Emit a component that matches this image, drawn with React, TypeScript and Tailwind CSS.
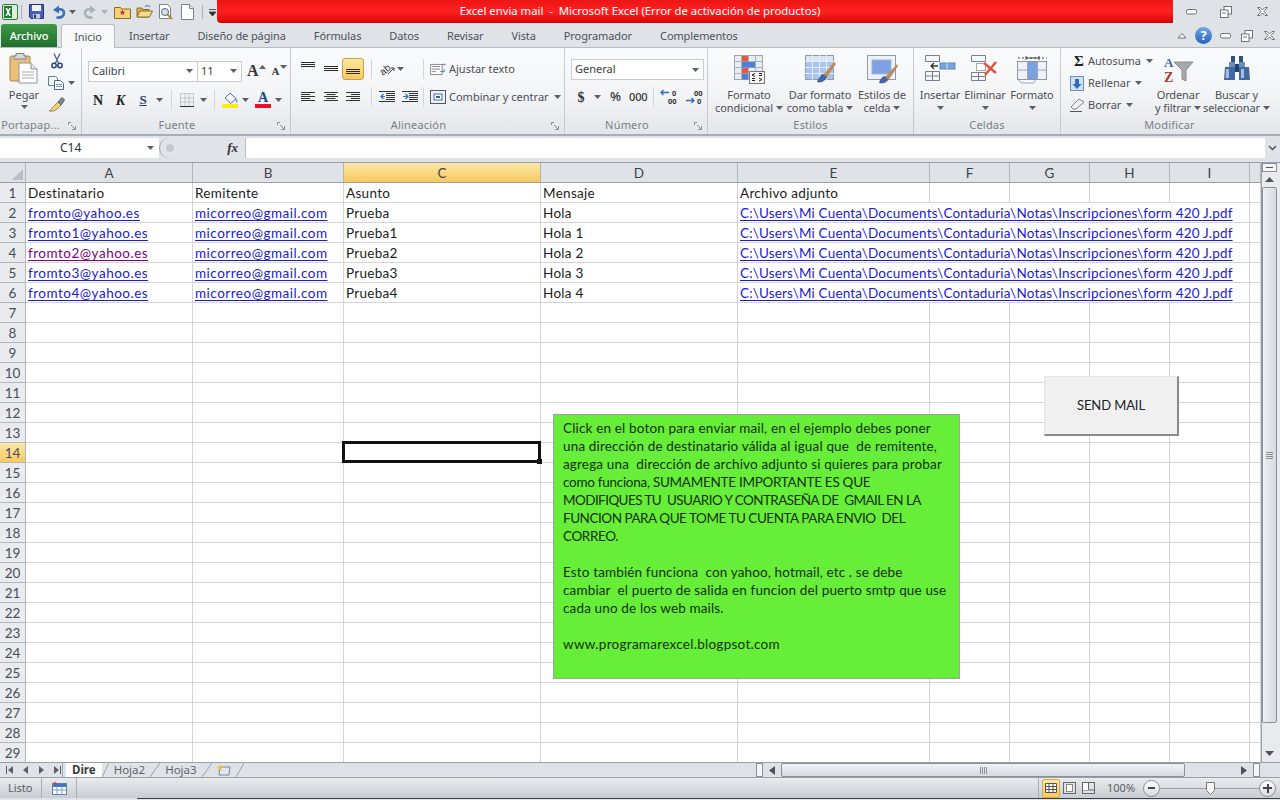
import type { ReactNode } from "react";

const ui = "font-['Noto_Sans','Open_Sans',sans-serif]";

function Caret({ className = "" }: { className?: string }) {
  return (
    <svg width="7" height="4" viewBox="0 0 7 4" className={`shrink-0 ${className}`}>
      <path d="M0 0h7L3.5 4z" fill="#5b5f66" />
    </svg>
  );
}

function ExcelLogo() {
  return (
    <svg width="16" height="16" viewBox="0 0 16 16" className="shrink-0">
      <rect x=".5" y=".5" width="15" height="15" rx="1.5" fill="#dcefd8" stroke="#2f7d3a" />
      <rect x="2" y="2" width="8" height="12" fill="#1e7a34" />
      <path d="M3.4 4h1.8l1 2.2L7.3 4h1.5L7 8l1.9 4H7.1L6 9.7 5 12H3.4l1.9-4z" fill="#fff" />
    </svg>
  );
}

function SaveIcon() {
  return (
    <svg width="15" height="15" viewBox="0 0 15 15" className="shrink-0 ml-[7px]">
      <path d="M.5.5h14v14H2L.5 13z" fill="#4a5fb5" stroke="#27347c" />
      <rect x="3" y="1" width="9" height="6" fill="#eef2fb" />
      <rect x="4" y="10" width="7" height="4.5" fill="#c7d0e8" />
      <rect x="5" y="10.6" width="2" height="3.4" fill="#27347c" />
    </svg>
  );
}

function UndoIcon({ gray = false, className = "" }: { gray?: boolean; className?: string }) {
  const c = gray ? "#a9b2ba" : "#3c6fb5";
  return (
    <svg width="14" height="14" viewBox="0 0 14 14" className={`shrink-0 ${gray ? "-scale-x-100" : ""} ${className}`}>
      <path d="M4.5 12.5c5 .6 7.5-1.600 7.500-4.500S9.500 3.500 6 4.500" fill="none" stroke={c} strokeWidth="2.600" />
      <path d="M7 .5 1 5l6 3.500z" fill={c} />
    </svg>
  );
}

function FolderStar() {
  return (
    <svg width="17" height="14" viewBox="0 0 17 14" className="shrink-0 ml-[6px]">
      <path d="M.5 2.500h6l1 1.500h9v9.500H.5z" fill="#f3d27a" stroke="#8e6d22" />
      <path d="M8.500 4.500l.8 2 2.100.2-1.600 1.400.5 2-1.800-1.100-1.800 1.100.5-2L5.600 6.700l2.100-.2z" fill="#c2332a" />
    </svg>
  );
}

function FolderOpen() {
  return (
    <svg width="17" height="15" viewBox="0 0 17 15" className="shrink-0 ml-[5px]">
      <path d="M1 4h5l1 1.500h6V13H1z" fill="#d9ab4c" stroke="#8e6d22" />
      <path d="M1 13l3-6h12.500l-3 6z" fill="#f6dc91" stroke="#8e6d22" />
      <path d="M9 3c1.500-2 3.500-2 5 0" fill="none" stroke="#3a7fc1" strokeWidth="1.200" />
    </svg>
  );
}

function PreviewIcon() {
  return (
    <svg width="16" height="16" viewBox="0 0 16 16" className="shrink-0 ml-[5px]">
      <path d="M1.500.5h8l3 3v11h-11z" fill="#fff" stroke="#7c828a" />
      <circle cx="7" cy="8" r="3.500" fill="#cfe3f5" stroke="#5a6470" />
      <path d="M9.500 10.500 14 15" stroke="#b08a35" strokeWidth="2" />
    </svg>
  );
}

function PageIcon() {
  return (
    <svg width="13" height="16" viewBox="0 0 13 16" className="shrink-0 ml-[7px]">
      <path d="M.5.500h8l4 4v11H.5z" fill="#fff" stroke="#7c828a" />
      <path d="M8.500.500v4h4" fill="#e3e8ee" stroke="#7c828a" />
    </svg>
  );
}

function WinButtons({ small = false }: { small?: boolean }) {
  const s = "#6c7480";
  return (
    <>
      <svg width="11" height="6" viewBox="0 0 11 6" className="shrink-0">
        <rect x=".5" y=".5" width="10" height="4.500" rx="1.500" fill="#fff" stroke={s} />
      </svg>
      <svg width="12" height="12" viewBox="0 0 12 12" className={`shrink-0 ${small ? "ml-[10px]" : "ml-[23px]"}`}>
        <rect x="4" y=".5" width="7.500" height="7.500" fill="#fff" stroke={s} />
        <rect x=".5" y="4" width="7.500" height="7.500" fill="#fff" stroke={s} />
        <path d="M2 7h4" stroke={s} />
      </svg>
      <svg width="13" height="11" viewBox="0 0 13 11" className={`shrink-0 ${small ? "ml-[10px]" : "ml-[24px]"}`}>
        <path d="M1.500 1.500h2.500l2.500 2.500L9 1.500h2.500L8 5.500l3.500 4H9L6.500 7 4 9.500H1.500L5 5.500z" fill="#fff" stroke={s} />
      </svg>
    </>
  );
}

function Group({ w, label, launcher, children, last, labelPad = "" }: { w: number; label: string; launcher?: boolean; children: ReactNode; last?: boolean; labelPad?: string }) {
  return (
    <div style={{ width: w }} className={`shrink-0 flex flex-col ${last ? "" : "border-r border-[#c6cad0]"}`}>
      <div className="h-[69px] flex">{children}</div>
      <div className={`h-[17px] flex items-center justify-center relative text-[#7b8087] text-[11px] tracking-[0.2px] ${labelPad}`}>
        {label}
        {launcher && (
          <svg width="8" height="8" viewBox="0 0 8 8" className="absolute right-[5px] top-[5px]">
            <path d="M.5 3V.5H3M3 3l4 4M4 7.500h3.500V4" fill="none" stroke="#8b9098" />
          </svg>
        )}
      </div>
    </div>
  );
}

function BigBtn({ w, lines, caret, children }: { w: number; lines: string[]; caret?: boolean; children: ReactNode }) {
  return (
    <div style={{ width: w }} className="shrink-0 flex flex-col items-center text-[11px] leading-[13px] text-[#4c4f55] tracking-[-0.1px]">
      <div className="h-[37px] pt-[7px] flex items-start justify-center">{children}</div>
      <div className="mt-[3px] text-center whitespace-nowrap">{lines[0]}</div>
      <div className="flex items-center justify-center gap-[3px] whitespace-nowrap h-[13px]">
        {lines[1]}
        {caret && <Caret />}
      </div>
    </div>
  );
}

function HLines({ rows }: { rows: number[] }) {
  return (
    <svg width="14" height="12" viewBox="0 0 14 12">
      {rows.map((y, i) => (
        <path key={i} d={`M0 ${y + 0.5}h14`} stroke="#2a2a2a" />
      ))}
    </svg>
  );
}

function AlignIcon({ kind }: { kind: "l" | "c" | "r" }) {
  const ws = [14, 9, 14, 9, 14];
  return (
    <svg width="14" height="11" viewBox="0 0 14 11">
      {ws.map((w, i) => {
        const x = kind === "l" ? 0 : kind === "c" ? (14 - w) / 2 : 14 - w;
        return <path key={i} d={`M${x} ${i * 2 + 0.5}h${w}`} stroke="#333" />;
      })}
    </svg>
  );
}

function IndentIcon({ flip = false }: { flip?: boolean }) {
  return (
    <svg width="16" height="12" viewBox="0 0 16 12" className="shrink-0">
      {[0, 2, 4, 6, 8, 10].map((y) => (
        <path key={y} d={`M${y === 0 || y === 10 ? 0 : 7} ${y + 0.5}h${y === 0 || y === 10 ? 16 : 9}`} stroke="#333" />
      ))}
      <path d={flip ? "M1 5.500h4M3.500 3l2.500 2.500L3.500 8" : "M6 5.500H2M4.500 3 2 5.500 4.500 8"} fill="none" stroke="#2c6fc0" strokeWidth="1.200" />
    </svg>
  );
}

function DecimalIcon({ more = false }: { more?: boolean }) {
  return (
    <svg width="20" height="18" viewBox="0 0 20 18" className="shrink-0 overflow-visible">
      {more ? (
        <>
          <text x="9" y="8" fontSize="7.500" fontWeight="700" fontFamily="Noto Sans" fill="#333">00</text>
          <text x="12" y="16" fontSize="7.500" fontWeight="700" fontFamily="Noto Sans" fill="#333">0</text>
          <path d="M1 12.500h8M6.500 10 9 12.500 6.500 15" fill="none" stroke="#2c6fc0" strokeWidth="1.300" />
        </>
      ) : (
        <>
          <text x="12" y="8" fontSize="7.500" fontWeight="700" fontFamily="Noto Sans" fill="#333">0</text>
          <text x="8" y="16" fontSize="7.500" fontWeight="700" fontFamily="Noto Sans" fill="#333">00</text>
          <path d="M9 4.500H1M3.500 2 1 4.500 3.500 7" fill="none" stroke="#2c6fc0" strokeWidth="1.300" />
        </>
      )}
    </svg>
  );
}

function Clipboard() {
  return (
    <svg width="30" height="32" viewBox="0 0 30 32">
      <rect x="1" y="4" width="20" height="25" rx="1.500" fill="#e9bf7a" stroke="#a98546" />
      <path d="M7 4V1.500h8V4h2v3H5V4z" fill="#d7d9dc" stroke="#80848a" />
      <path d="M10 11h12l6 6v14H10z" fill="#fff" stroke="#8e9299" />
      <path d="M22 11v6h6" fill="#e6e8eb" stroke="#8e9299" />
      <path d="M13 20h12M13 23h12M13 26h12" stroke="#a4a8ae" />
    </svg>
  );
}

function Scissors() {
  return (
    <svg width="12" height="16" viewBox="0 0 12 16" className="ml-[3px]">
      <path d="M3 .500 7.500 10M9 .500 4.500 10" stroke="#5c6a7c" strokeWidth="1.400" />
      <circle cx="3" cy="12.500" r="2.200" fill="none" stroke="#28457f" strokeWidth="1.500" />
      <circle cx="9" cy="12.500" r="2.200" fill="none" stroke="#28457f" strokeWidth="1.500" />
    </svg>
  );
}

function CopyIcon() {
  return (
    <svg width="16" height="14" viewBox="0 0 16 14">
      <path d="M.5.500h7l2 2v7h-9z" fill="#f2f6fb" stroke="#5e7fa8" />
      <path d="M6.500 4.500h6l3 3v6h-9z" fill="#fff" stroke="#3f66a0" />
      <path d="M8 8.500h6M8 10.500h6" stroke="#7b9ac4" />
    </svg>
  );
}

function BrushIcon() {
  return (
    <svg width="17" height="15" viewBox="0 0 17 15">
      <path d="M10 5l3 3-4 4c-2 2-5 2.500-8 2 2.500-1 3-3 4.500-4.500z" fill="#ecd27f" stroke="#a08a3c" />
      <path d="M10 5l4-4.500 2.500 2.500-3.500 5z" fill="#7d8692" stroke="#525a64" />
    </svg>
  );
}

function FormatCond() {
  return (
    <svg width="31" height="29" viewBox="0 0 31 29">
      <rect x=".5" y=".5" width="28" height="24" fill="#e8edf4" stroke="#9aa4b2" />
      <path d="M7.500 0v25M14.500 0v25M21.500 0v25M0 6.500h29M0 12.500h29M0 18.500h29" stroke="#a9b2bf" />
      <rect x="8" y="1" width="6" height="5.500" fill="#e2574c" />
      <rect x="8" y="7" width="13" height="5.500" fill="#4f7fd6" />
      <rect x="8" y="13" width="6" height="5.500" fill="#e2574c" />
      <rect x="8" y="19" width="6" height="5.500" fill="#4f7fd6" />
      <rect x="15.500" y="16.500" width="15" height="12" fill="#f6f6f6" stroke="#777" />
      <path d="M21 18.500l-3 1.500 3 1.500M18 23.500h3M25 18.500h3M25 20.500h3M25 23l3 1.500-3 1.500M18 25.500h3" fill="none" stroke="#222" />
    </svg>
  );
}

function TableFormat() {
  return (
    <svg width="31" height="29" viewBox="0 0 31 29">
      <rect x=".5" y=".5" width="28" height="24" fill="#a9c4ee" stroke="#8d9bb0" />
      <rect x="1" y="1" width="27" height="6" fill="#dbe6f7" />
      <path d="M7.500 0v25M14.500 0v25M21.500 0v25M0 6.500h29M0 12.500h29M0 18.500h29" stroke="#e6edf8" />
      <path d="M29 7 20 18l-3 2-5 7c5 1 8-1 10-5l9-13z" fill="#b98c5b" />
      <path d="M12 27c1-4 4-7 6-8l4 3c-2 4-5 6-10 5z" fill="#3f66a8" />
    </svg>
  );
}

function CellStyles() {
  return (
    <svg width="31" height="29" viewBox="0 0 31 29">
      <rect x=".5" y=".5" width="28" height="24" fill="#eef2f7" stroke="#8d9bb0" />
      <rect x="5" y="5" width="19" height="14" fill="#7f9fe6" stroke="#a7b4c6" />
      <path d="M30 9l-10 11-3 2-4 6c5 1 8-1 10-5l8-12z" fill="#b98c5b" />
      <path d="M12 28c1-4 3-6 5-7l4 3c-2 3-4 5-9 4z" fill="#3f66a8" />
    </svg>
  );
}

function InsertCells() {
  return (
    <svg width="31" height="27" viewBox="0 0 31 27">
      <path d="M.5.500h14v6H.500zM.500 16.500h14v9H.500zM7.500 16.500v9M.500 21h14" fill="#f4f6f9" stroke="#76808c" />
      <rect x="15" y="8" width="15" height="6" fill="#78a6dc" stroke="#5a86bd" />
      <path d="M22 8v6" stroke="#cfe0f4" />
      <path d="M13 11H6M9 8l-3 3 3 3" fill="none" stroke="#333" strokeWidth="1.300" />
    </svg>
  );
}

function DeleteCells() {
  return (
    <svg width="28" height="27" viewBox="0 0 28 27">
      <path d="M.5.500h14v6H.500zM.500 17.500h14v8H.500zM7.500 17.500v8M.500 21.500h14" fill="#f4f6f9" stroke="#76808c" />
      <path d="M5.500 8.500h9v7h-9z" fill="#fff" stroke="#555" strokeDasharray="1 1" />
      <path d="M13 8l12 10M25 7 14 20" stroke="#e0503c" strokeWidth="2.400" />
    </svg>
  );
}

function FormatCells() {
  return (
    <svg width="31" height="30" viewBox="0 0 31 30">
      <path d="M1 3h29" stroke="#444" strokeDasharray="2 2" />
      <path d="M9 3h13M9 1v4M22 1v4" stroke="#444" />
      <rect x=".5" y="6.500" width="29" height="18" fill="#eef1f5" stroke="#8a96a5" />
      <rect x="11" y="7" width="9" height="17" fill="#7aa2e2" />
      <path d="M10.500 6v19M20.500 6v19M0 15h11M20 15h10" stroke="#9aa6b4" />
      <path d="M2 25c0 3 4 3 6 3h8c2 0 2-3 2-3" fill="none" stroke="#9aa6b4" />
    </svg>
  );
}

function SortFilter() {
  return (
    <svg width="31" height="30" viewBox="0 0 31 30" className="overflow-visible">
      <path d="M11 7h19l-7 8v11l-4-2v-9z" fill="#a7a9ad" stroke="#8a8c90" />
      <text x="1" y="12" fontSize="13" fontWeight="700" fontFamily="Liberation Serif" fill="#3d63ab">A</text>
      <text x="1" y="27" fontSize="14" fontWeight="700" fontFamily="Liberation Serif" fill="#9c3a30">Z</text>
    </svg>
  );
}

function Binoculars() {
  return (
    <svg width="28" height="27" viewBox="0 0 28 27">
      <path d="M8 1h4v6H8zM16 1h4v6h-4z" fill="#2f4f7d" />
      <path d="M6 7h6v5H6zM16 7h6v5h-6z" fill="#6a8cb8" />
      <path d="M2 12h10v13H1z" fill="#42699e" />
      <path d="M16 12h10l1 13H16z" fill="#42699e" />
      <path d="M3 14h3v9H2.500zM18 14h3v9h-3z" fill="#a2bddd" />
      <rect x="12" y="9" width="4" height="8" fill="#24406b" />
    </svg>
  );
}

function NavArrows() {
  return (
    <div className="w-[63px] flex items-center gap-[8px] pl-[6px] border-r border-[#9aa0a8] h-full shrink-0">
      {["M0 0v8h1V0zM7 0v8L2 4z", "M6 0v8L1 4z", "M1 0v8l5-4z", "M7 0v8H6V0zM0 0v8l5-4z"].map((d) => (
        <svg key={d} width="8" height="8" viewBox="0 0 8 8">
          <path d={d} fill="#5a6068" />
        </svg>
      ))}
    </div>
  );
}

function TabSlash({ w }: { w: number }) {
  return (
    <svg width={w} height="14" viewBox={`0 0 ${w} 14`} className="shrink-0">
      <path d={`M0 14 ${w} 0`} stroke="#9aa0a8" />
    </svg>
  );
}

const cols = [167, 151, 197, 197, 192, 80, 80, 80, 80, 11];
const letters = ["A", "B", "C", "D", "E", "F", "G", "H", "I", ""];

const attach = "C:\\Users\\Mi Cuenta\\Documents\\Contaduria\\Notas\\Inscripciones\\form 420 J.pdf";
const data: string[][] = [
  ["Destinatario", "Remitente", "Asunto", "Mensaje", "Archivo adjunto"],
  ["fromto@yahoo.es", "micorreo@gmail.com", "Prueba", "Hola", attach],
  ["fromto1@yahoo.es", "micorreo@gmail.com", "Prueba1", "Hola 1", attach],
  ["fromto2@yahoo.es", "micorreo@gmail.com", "Prueba2", "Hola 2", attach],
  ["fromto3@yahoo.es", "micorreo@gmail.com", "Prueba3", "Hola 3", attach],
  ["fromto4@yahoo.es", "micorreo@gmail.com", "Prueba4", "Hola 4", attach],
];

const noteLines: { t: string; c: string }[] = [
  { t: "Click en el boton para enviar mail, en el ejemplo debes poner", c: "tracking-[0.16px]" },
  { t: "una dirección de destinatario válida al igual que  de remitente,", c: "tracking-[0.16px]" },
  { t: "agrega una  dirección de archivo adjunto si quieres para probar", c: "tracking-[0.16px]" },
  { t: "como funciona, SUMAMENTE IMPORTANTE ES QUE", c: "tracking-[-0.28px]" },
  { t: "MODIFIQUES TU  USUARIO Y CONTRASEÑA DE  GMAIL EN LA", c: "tracking-[-0.57px]" },
  { t: "FUNCION PARA QUE TOME TU CUENTA PARA ENVIO  DEL", c: "tracking-[-0.47px]" },
  { t: "CORREO.", c: "tracking-[-0.4px]" },
  { t: " ", c: "" },
  { t: "Esto también funciona  con yahoo, hotmail, etc . se debe", c: "tracking-[0.14px]" },
  { t: "cambiar  el puerto de salida en funcion del puerto smtp que use", c: "tracking-[0.14px]" },
  { t: "cada uno de los web mails.", c: "tracking-[0.14px]" },
  { t: " ", c: "" },
  { t: "www.programarexcel.blogpsot.com", c: "tracking-[0.28px]" },
];

function Cell({ r, c }: { r: number; c: number }) {
  const text = data[r]?.[c];
  const isLink = r >= 1 && r <= 5 && (c <= 1 || c === 4);
  const visited = r === 3 && c === 0;
  const noRight = r >= 1 && r <= 5 && c >= 4 && c <= 7;
  const selected = r === 13 && c === 2;
  const spacing = isLink ? (c === 4 ? "tracking-[0.18px]" : "tracking-[0.5px]") : "tracking-[0.3px]";
  return (
    <div
      style={{ width: cols[c] }}
      className={`shrink-0 h-full relative border-b border-[#d4d4d4] pl-[2px] pt-[2px] flex items-center ${noRight ? "" : "border-r"}`}
    >
      {text && (
        <span
          className={`whitespace-nowrap ${spacing} ${isLink ? "underline underline-offset-[2px]" : ""} ${visited ? "text-[#800080]" : isLink ? "text-[#1a1ad0]" : "text-[#1c1c1c]"}`}
        >
          {text}
        </span>
      )}
      {selected && (
        <div className="absolute -left-[2px] -top-[2px] -right-[1px] -bottom-[1px] border-[3px] border-[#111] z-10">
          <div className="absolute -right-[4px] -bottom-[4px] w-[5px] h-[5px] bg-[#111]" />
        </div>
      )}
    </div>
  );
}

export default function App() {
  return (
    <div className={`w-[1280px] h-[800px] overflow-hidden bg-[#dfe3e8] flex flex-col ${ui}`}>
      {/* Title bar */}
      <div className="h-[23px] flex shrink-0 bg-[#dfe3e8]">
        <div className="w-[217px] shrink-0 flex items-center pl-[2px]">
          <ExcelLogo />
          <div className="w-px h-[14px] bg-[#a7adb5] ml-[3px] shrink-0" />
          <SaveIcon />
          <UndoIcon className="ml-[8px]" />
          <Caret className="ml-[3px]" />
          <UndoIcon gray className="ml-[7px]" />
          <Caret className="ml-[4px] opacity-40" />
          <FolderStar />
          <FolderOpen />
          <PreviewIcon />
          <PageIcon />
          <div className="w-px h-[14px] bg-[#a7adb5] ml-[8px] shrink-0" />
          <svg width="7" height="8" viewBox="0 0 7 8" className="ml-[6px] shrink-0">
            <path d="M0 1.500h7M0 4h7L3.500 8z" stroke="#333" fill="#333" strokeWidth=".8" />
          </svg>
        </div>
        <div className="w-[956px] shrink-0 rounded-bl-[4px] bg-gradient-to-b from-[#ee1515] via-[#ff2020] to-[#d90000] text-white flex items-center justify-center pr-[110px]">
          <span className="text-[11.300px] whitespace-pre">Excel envia mail  -  Microsoft Excel (Error de activación de productos)</span>
        </div>
        <div className="flex-1 flex items-center pl-[13px]">
          <WinButtons />
        </div>
      </div>

      {/* Ribbon tabs */}
      <div className="h-[25px] shrink-0 flex items-end text-[11px] text-[#4e525a] tracking-[-0.1px] border-b border-[#b7bcc3]">
        <div className="w-[56px] h-[23px] ml-px pt-[1px] rounded-t-[3px] bg-gradient-to-b from-[#3f9a45] to-[#1e6e2c] text-white font-medium flex items-center justify-center">Archivo</div>
        <div className="w-[54px] h-[24px] ml-[4px] -mb-px pt-[1px] rounded-t-[3px] bg-[#f8f9fa] border border-b-0 border-[#b7bcc3] flex items-center justify-center">Inicio</div>
        <div className="flex items-center h-[23px] pt-[1px]">
          <span className="ml-[14px]">Insertar</span>
          <span className="ml-[28px]">Diseño de página</span>
          <span className="ml-[28px]">Fórmulas</span>
          <span className="ml-[28px]">Datos</span>
          <span className="ml-[28px]">Revisar</span>
          <span className="ml-[28px]">Vista</span>
          <span className="ml-[28px]">Programador</span>
          <span className="ml-[28px]">Complementos</span>
        </div>
        <div className="flex-1 flex items-center justify-end h-[23px] pr-[4px]">
          <svg width="10" height="7" viewBox="0 0 10 7" className="mr-[8px] shrink-0">
            <path d="M1 6l4-4.500L9 6z" fill="#fff" stroke="#6c7480" />
          </svg>
          <div className="w-[17px] h-[17px] mr-[8px] rounded-full bg-gradient-to-b from-[#6fa6e8] to-[#2a62b8] text-white font-bold text-[13px] flex items-center justify-center shrink-0">?</div>
          <WinButtons small />
        </div>
      </div>

      {/* Ribbon */}
      <div className="h-[88px] shrink-0 flex bg-gradient-to-b from-[#fafbfc] via-[#f4f5f7] to-[#e3e6ea] border-b-2 border-[#a9aeb5]">
        <Group w={82} label="Portapap..." launcher labelPad="pr-[20px]">
          <div className="w-[48px] flex flex-col items-center pt-[4px] text-[11px] leading-[13px] text-[#4c4f55]">
            <Clipboard />
            <div className="mt-[4px]">Pegar</div>
            <Caret className="mt-[4px]" />
          </div>
          <div className="flex flex-col pt-[5px]">
            <Scissors />
            <div className="flex items-center gap-[4px] mt-[7px]">
              <CopyIcon />
              <Caret />
            </div>
            <div className="mt-[7px]"><BrushIcon /></div>
          </div>
        </Group>

        <Group w={209} label="Fuente" launcher labelPad="pr-[18px]">
          <div className="flex flex-col pl-[6px] pt-[11px]">
            <div className="flex items-center">
              <div className="w-[110px] h-[21px] bg-white border border-[#c9cdd3] flex items-center justify-between pl-[3px] pr-[4px] text-[11px] text-[#3a3d42]">
                Calibri
                <Caret />
              </div>
              <div className="w-[44px] h-[21px] bg-white border border-l-0 border-[#c9cdd3] flex items-center justify-between pl-[3px] pr-[4px] text-[11px] text-[#3a3d42]">
                11
                <Caret />
              </div>
              <span className="ml-[5px] font-['Liberation_Serif',serif] font-bold text-[16px] text-[#333]">A</span>
              <Caret className="rotate-180 -mt-[8px]" />
              <span className="ml-[6px] font-['Liberation_Serif',serif] font-bold text-[11px] text-[#333]">A</span>
              <Caret className="-mt-[8px]" />
            </div>
            <div className="flex items-center h-[22px] mt-[6px] text-[#222]">
              <span className="w-[20px] font-['Liberation_Serif',serif] font-bold text-[14px] text-center">N</span>
              <span className="w-[25px] font-['Liberation_Serif',serif] font-bold italic text-[14px] text-center">K</span>
              <span className="w-[20px] font-['Liberation_Serif',serif] font-bold underline text-[13px] text-center text-[#283a63]">S</span>
              <Caret className="ml-[3px]" />
              <div className="w-px h-[20px] bg-[#d3d6da] mx-[8px] shrink-0" />
              <svg width="14" height="14" viewBox="0 0 14 14" className="shrink-0">
                <path d="M.5.500h13v13H.500zM5 .5v13M9 .5v13M.5 5h13M.5 9h13" fill="none" stroke="#9aa0a8" strokeDasharray="1 1" />
                <path d="M0 13.500h14" stroke="#333" />
              </svg>
              <Caret className="ml-[6px]" />
              <div className="w-px h-[20px] bg-[#d3d6da] mx-[7px] shrink-0" />
              <div className="flex flex-col items-center w-[16px] shrink-0">
                <svg width="15" height="12" viewBox="0 0 15 12">
                  <path d="M7 1l6 5.500-5 5-6-5.500z" fill="#f4f6f9" stroke="#4e6d9c" />
                  <path d="M12 6c2 1.500 3 3 2 4.500-1-1-1.500-2.500-2-4.500z" fill="#3a76c0" />
                </svg>
                <div className="w-[16px] h-[4px] bg-[#f6ee12]" />
              </div>
              <Caret className="ml-[4px]" />
              <div className="flex flex-col items-center w-[16px] ml-[6px] shrink-0">
                <span className="font-['Liberation_Serif',serif] font-bold text-[14px] leading-[12px] text-[#23418a]">A</span>
                <div className="w-[16px] h-[4px] bg-[#e8102a]" />
              </div>
              <Caret className="ml-[4px]" />
            </div>
          </div>
        </Group>

        <Group w={274} label="Alineación" launcher labelPad="pr-[18px]">
          <div className="flex flex-col pl-[5px] pt-[10px]">
            <div className="flex items-center h-[22px]">
              <div className="w-[24px] flex justify-center -mt-[5px]"><HLines rows={[1, 3, 5]} /></div>
              <div className="w-[22px] flex justify-center"><HLines rows={[3, 5, 7]} /></div>
              <div className="w-[22px] h-[22px] flex items-center justify-center rounded-[3px] border border-[#c2a24a] bg-gradient-to-b from-[#fde7a0] to-[#f9c95c]">
                <HLines rows={[6, 8, 10]} />
              </div>
              <div className="w-px h-[20px] bg-[#d3d6da] mx-[7px] shrink-0" />
              <svg width="16" height="14" viewBox="0 0 16 14" className="shrink-0 overflow-visible">
                <text x="0" y="11" fontSize="10" fontFamily="Liberation Sans" fill="#333" transform="rotate(-40 6 7)">ab</text>
                <path d="M9 12l6-6M15 6h-3M15 6v3" stroke="#444" fill="none" />
              </svg>
              <Caret className="ml-[2px]" />
              <div className="w-px h-[20px] bg-[#d3d6da] ml-[19px] mr-[6px] shrink-0" />
              <svg width="16" height="15" viewBox="0 0 19 15" className="mr-[3px] shrink-0">
                <path d="M.5 1.500h14v12H.500z" fill="#fff" stroke="#777" />
                <path d="M2 4h10M2 7h10M2 10h5" stroke="#6b7280" />
                <path d="M12 10h5v-3" fill="none" stroke="#2c6fc0" />
                <path d="M14.500 1.500h4M17 .5v2" stroke="#777" />
              </svg>
              <span className="text-[11px] text-[#4c4f55] whitespace-nowrap">Ajustar texto</span>
            </div>
            <div className="flex items-center h-[22px] mt-[6px]">
              <div className="w-[24px] flex justify-center"><AlignIcon kind="l" /></div>
              <div className="w-[22px] flex justify-center"><AlignIcon kind="c" /></div>
              <div className="w-[22px] flex justify-center"><AlignIcon kind="r" /></div>
              <div className="w-px h-[20px] bg-[#d3d6da] mx-[7px] shrink-0" />
              <IndentIcon />
              <div className="w-[7px] shrink-0" />
              <IndentIcon flip />
              <div className="w-px h-[20px] bg-[#d3d6da] ml-[5px] mr-[6px] shrink-0" />
              <svg width="16" height="14" viewBox="0 0 16 14" className="mr-[3px] shrink-0">
                <rect x=".5" y=".5" width="15" height="13" fill="#eef1f5" stroke="#556" />
                <rect x="4" y="4" width="8" height="6" fill="#fff" stroke="#2c6fc0" />
                <path d="M6 7h4" stroke="#222" strokeWidth="1.500" />
              </svg>
              <span className="text-[11px] text-[#4c4f55] whitespace-nowrap">Combinar y centrar</span>
              <Caret className="ml-[5px]" />
            </div>
          </div>
        </Group>

        <Group w={143} label="Número" launcher labelPad="pr-[18px]">
          <div className="flex flex-col pl-[6px] pt-[11px]">
            <div className="w-[133px] h-[21px] bg-white border border-[#c9cdd3] flex items-center justify-between pl-[3px] pr-[4px] text-[11px] text-[#3a3d42]">
              General
              <Caret />
            </div>
            <div className="flex items-center h-[22px] mt-[6px] text-[#333]">
              <span className="w-[20px] text-center font-['Liberation_Serif',serif] font-bold text-[14px]">$</span>
              <Caret className="ml-[3px]" />
              <span className="ml-[9px] text-[13px] font-medium">%</span>
              <span className="ml-[8px] text-[11px] font-medium tracking-[-0.2px]">000</span>
              <div className="w-px h-[20px] bg-[#d3d6da] mx-[6px] shrink-0" />
              <DecimalIcon />
              <div className="w-[5px] shrink-0" />
              <DecimalIcon more />
            </div>
          </div>
        </Group>

        <Group w={206} label="Estilos">
          <div className="w-[7px] shrink-0" />
          <BigBtn w={68} lines={["Formato", "condicional"]} caret><FormatCond /></BigBtn>
          <BigBtn w={74} lines={["Dar formato", "como tabla"]} caret><TableFormat /></BigBtn>
          <BigBtn w={50} lines={["Estilos de", "celda"]} caret><CellStyles /></BigBtn>
        </Group>

        <Group w={147} label="Celdas">
          <div className="w-[2px] shrink-0" />
          <BigBtn w={48} lines={["Insertar", ""]} caret><InsertCells /></BigBtn>
          <BigBtn w={42} lines={["Eliminar", ""]} caret><DeleteCells /></BigBtn>
          <BigBtn w={52} lines={["Formato", ""]} caret><FormatCells /></BigBtn>
        </Group>

        <Group w={217} label="Modificar" last>
          <div className="flex flex-col w-[92px] shrink-0 pl-[9px] pt-[2px] text-[11px] text-[#4c4f55]">
            <div className="flex items-center h-[22px]">
              <span className="w-[18px] text-[15px] font-['Liberation_Serif',serif] font-bold text-[#222] text-center">Σ</span>
              <span>Autosuma</span>
              <Caret className="ml-[5px]" />
            </div>
            <div className="flex items-center h-[22px]">
              <svg width="14" height="15" viewBox="0 0 14 15" className="mr-[4px] shrink-0">
                <rect x=".5" y=".5" width="13" height="14" fill="#cfe0f4" stroke="#6f8fb8" />
                <path d="M5 3h4v5h2.500L7 13 2.500 8H5z" fill="#2f6cc0" />
              </svg>
              <span>Rellenar</span>
              <Caret className="ml-[5px]" />
            </div>
            <div className="flex items-center h-[22px]">
              <svg width="15" height="14" viewBox="0 0 15 14" className="mr-[3px] shrink-0">
                <path d="M1 9l8-8 5 3-8 7H3z" fill="#f1f3f6" stroke="#7c828a" />
                <path d="M0 13.500h12" stroke="#555" />
              </svg>
              <span>Borrar</span>
              <Caret className="ml-[5px]" />
            </div>
          </div>
          <BigBtn w={50} lines={["Ordenar", "y filtrar"]} caret><SortFilter /></BigBtn>
          <BigBtn w={67} lines={["Buscar y", "seleccionar"]} caret><Binoculars /></BigBtn>
        </Group>
      </div>

      {/* Formula bar */}
      <div className="h-[26px] shrink-0 flex pt-[2px] pb-[4px] bg-[#dfe3e8]">
        <div className="w-[159px] h-full bg-white flex items-center justify-between pr-[5px] pl-[60px] text-[12px] text-[#333] shrink-0">
          C14
          <Caret />
        </div>
        <div className="w-[86px] h-full shrink-0 bg-[#e1e4e8] rounded-l-[10px] border-l border-[#9aa0a8] flex items-center justify-between pl-[6px] pr-[7px]">
          <div className="w-[8px] h-[8px] rounded-full bg-[#c6cad0]" />
          <span className="font-['Liberation_Serif',serif] italic font-bold text-[13px] text-[#333]">fx</span>
        </div>
        <div className="flex-1 h-full bg-white border-l border-[#b7bcc3]" />
        <div className="w-[15px] h-full flex items-center justify-center bg-[#dfe3e8] shrink-0">
          <svg width="9" height="6" viewBox="0 0 9 6"><path d="M1 1l3.500 3.500L8 1" fill="none" stroke="#555" strokeWidth="1.500" /></svg>
        </div>
      </div>

      {/* Sheet + vertical scroll */}
      <div className="h-[600px] shrink-0 flex bg-[#dfe3e8] border-t border-[#9aa0a8]">
        <div className="w-[1261px] shrink-0 relative bg-white font-['Lato',sans-serif] text-[13.500px] overflow-hidden">
          <div className="h-[20px] flex border-b border-[#9aa0a8] text-[#3f434a] bg-[#dfe3e8]">
            <div className="w-[26px] shrink-0 border-r border-[#b2b7be] flex items-end justify-end pr-[2px] pb-[2px]">
              <svg width="11" height="11" viewBox="0 0 11 11"><path d="M11 0v11H0z" fill="#b9bec5" /></svg>
            </div>
            {cols.map((w, i) => (
              <div
                key={i}
                style={{ width: w }}
                className={`shrink-0 border-r border-[#b2b7be] pt-[2px] flex items-center justify-center ${i === 2 ? "bg-gradient-to-b from-[#fbe7a5] to-[#f7c95f]" : ""}`}
              >
                {letters[i]}
              </div>
            ))}
          </div>
          {Array.from({ length: 29 }, (_, r) => (
            <div key={r} className="h-[20px] flex">
              <div
                className={`w-[26px] shrink-0 border-r border-b border-[#b2b7be] pt-[2px] flex items-center justify-center text-[#4a4e55] ${r === 13 ? "bg-gradient-to-b from-[#fbe7a5] to-[#f7c95f]" : "bg-[#e9ebee]"}`}
              >
                {r + 1}
              </div>
              {cols.map((_, c) => (
                <Cell key={c} r={r} c={c} />
              ))}
            </div>
          ))}

          {/* Floating shapes */}
          <div className="absolute left-[553px] top-[251px] w-[407px] h-[265px] bg-[#66ee38] border border-[#9aa49a] pl-[9px] pt-[4px] text-[#17300f] text-[13.500px] leading-[18px] z-20">
            {noteLines.map((l, i) => (
              <div key={i} className={`whitespace-pre h-[18px] ${l.c}`}>{l.t}</div>
            ))}
          </div>
          <div className="absolute left-[1044px] top-[213px] w-[135px] h-[60px] bg-[#f0f0f0] border-t border-l border-[#e4e4e4] border-r-2 border-b-2 border-r-[#8a8a8a] border-b-[#8a8a8a] flex items-center justify-center text-[13px] tracking-[-0.1px] text-[#222] z-20">
            SEND MAIL
          </div>
        </div>

        <div className="flex-1 flex flex-col items-center border-l border-[#9aa0a8] pr-[3px] bg-[#e8eaee]">
          <div className="w-[15px] h-[9px] bg-[#f4f5f7] border border-[#8b9098] flex items-center justify-center shrink-0">
            <div className="w-[7px] h-px bg-[#555]" />
          </div>
          <div className="h-[14px] flex items-center shrink-0">
            <svg width="9" height="5" viewBox="0 0 9 5"><path d="M0 5l4.500-5L9 5z" fill="#4e535a" /></svg>
          </div>
          <div className="w-[15px] h-[536px] shrink-0 rounded-[2px] border border-[#8b9098] bg-gradient-to-r from-[#eef0f3] to-[#d6dae0] flex items-center justify-center mt-[1px]">
            <div className="w-[7px] flex flex-col gap-px">
              <div className="h-px bg-[#8b9098]" /><div className="h-px bg-[#8b9098]" /><div className="h-px bg-[#8b9098]" /><div className="h-px bg-[#8b9098]" />
            </div>
          </div>
          <div className="flex-1" />
          <div className="h-[18px] flex items-center shrink-0">
            <svg width="9" height="5" viewBox="0 0 9 5"><path d="M0 0l4.500 5L9 0z" fill="#4e535a" /></svg>
          </div>
        </div>
      </div>

      {/* Sheet tabs + horizontal scroll */}
      <div className="h-[15px] shrink-0 flex items-center bg-[#dfe3e8] border-t border-[#9aa0a8]">
        <NavArrows />
        <div className="flex items-center ml-[3px] w-[697px] shrink-0 text-[11.500px] text-[#5e636a]">
          <div className="h-[14px] px-[6px] flex items-center font-bold text-[#3a3d42] bg-white">Dire</div>
          <TabSlash w={7} />
          <div className="px-[5px]">Hoja2</div>
          <TabSlash w={10} />
          <div className="px-[5px]">Hoja3</div>
          <TabSlash w={10} />
          <svg width="16" height="14" viewBox="0 0 16 14" className="ml-[4px] shrink-0">
            <path d="M4 4h10l-1 8H3z" fill="#dfe7f2" stroke="#7b8794" />
            <path d="M4 .5l1 2.500 2.500.5-2 1.500.5 2.500-2-1.500L2 8l.5-2.500-2-1.500L3 3.500z" fill="#f0c33c" />
          </svg>
          <div className="ml-[4px]"><TabSlash w={8} /></div>
        </div>
        <div className="w-[7px] h-[14px] bg-[#f4f5f7] border border-[#8b9098] shrink-0 ml-[-7px]" />
        <svg width="6" height="9" viewBox="0 0 6 9" className="ml-[6px] shrink-0"><path d="M6 0v9L0 4.500z" fill="#4e535a" /></svg>
        <div className="w-[404px] h-[14px] ml-[6px] shrink-0 rounded-[2px] border border-[#8b9098] bg-gradient-to-b from-[#f0f2f5] to-[#d6dae0] flex items-center justify-center gap-px">
          <div className="w-px h-[7px] bg-[#8b9098]" /><div className="w-px h-[7px] bg-[#8b9098]" /><div className="w-px h-[7px] bg-[#8b9098]" /><div className="w-px h-[7px] bg-[#8b9098]" />
        </div>
        <svg width="6" height="9" viewBox="0 0 6 9" className="ml-[56px] shrink-0"><path d="M0 0v9l6-4.500z" fill="#4e535a" /></svg>
        <div className="w-[7px] h-[14px] bg-[#f4f5f7] border border-[#8b9098] shrink-0 ml-[6px]" />
      </div>

      {/* Status bar */}
      <div className="h-[21px] shrink-0 flex items-center bg-gradient-to-b from-[#e9ebee] to-[#c9cdd3] border-t border-[#9aa0a8] text-[11px] text-[#5a5e65]">
        <div className="w-[42px] pl-[8px] border-r border-[#a9aeb5] h-full flex items-center shrink-0">Listo</div>
        <div className="w-[35px] flex justify-center border-r border-[#a9aeb5] h-full items-center shrink-0">
          <svg width="15" height="13" viewBox="0 0 15 13">
            <rect x=".5" y="1.500" width="14" height="11" fill="#fff" stroke="#5e7fa8" />
            <rect x="1" y="2" width="13" height="3" fill="#3f78c4" />
            <path d="M5 5v7M10 5v7M1 8h13" stroke="#7b9ac4" />
            <circle cx="3" cy="1.500" r="1.500" fill="#d8432e" />
          </svg>
        </div>
        <div className="flex-1" />
        <div className="w-px h-full bg-[#a9aeb5]" />
        <div className="w-[18px] h-[19px] ml-[3px] rounded-[2px] border border-[#d6ae45] bg-gradient-to-b from-[#fde7a0] to-[#f9c95c] flex items-center justify-center shrink-0">
          <svg width="12" height="10" viewBox="0 0 12 10"><path d="M.5.500h11v9H.500zM4 .5v9M8 .5v9M.5 3.500h11M.5 6.500h11" fill="#fff" stroke="#555" /></svg>
        </div>
        <svg width="13" height="12" viewBox="0 0 13 12" className="ml-[3px] shrink-0"><rect x=".5" y=".5" width="12" height="11" fill="#dfe3e8" stroke="#666" /><rect x="3.500" y="2.500" width="6" height="7" fill="#fff" stroke="#888" /></svg>
        <svg width="13" height="12" viewBox="0 0 13 12" className="ml-[6px] shrink-0"><rect x=".5" y=".5" width="12" height="11" fill="#dfe3e8" stroke="#666" /><path d="M6.500 .5v7M.5 8h12" stroke="#666" /><rect x="1" y="1" width="5" height="7" fill="#fff" /></svg>
        <span className="ml-[12px] w-[30px] text-[11px]">100%</span>
        <div className="w-[17px] h-[17px] ml-[6px] rounded-full border border-[#8b9098] bg-gradient-to-b from-white to-[#d6dae0] flex items-center justify-center shrink-0">
          <div className="w-[7px] h-[2px] bg-[#444]" />
        </div>
        <div className="w-[99px] h-px bg-[#9aa0a8] relative shrink-0">
          <svg width="9" height="13" viewBox="0 0 9 13" className="absolute left-[46px] -top-[6px]"><path d="M.5.500h8v8L4.500 12.500.5 8.500z" fill="#f4f5f7" stroke="#777" /></svg>
        </div>
        <div className="w-[17px] h-[17px] rounded-full border border-[#8b9098] bg-gradient-to-b from-white to-[#d6dae0] flex items-center justify-center relative shrink-0">
          <div className="w-[9px] h-[2px] bg-[#444]" />
          <div className="absolute w-[2px] h-[9px] bg-[#444]" />
        </div>
        <div className="w-[4px] shrink-0" />
      </div>
      <div className="h-px ml-[137px] bg-[#3a3f46] shrink-0" />
    </div>
  );
}
